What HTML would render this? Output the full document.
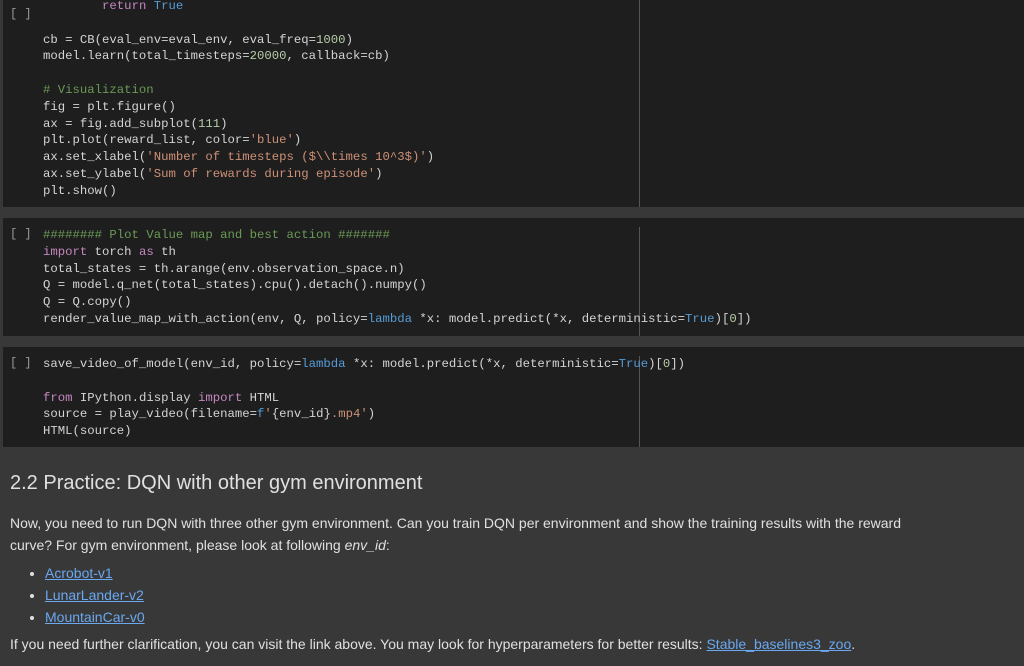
<!DOCTYPE html>
<html><head><meta charset="utf-8"><style>
body{margin:0;width:1024px;height:666px;background:#383838;overflow:hidden;position:relative;font-family:"Liberation Sans",sans-serif}
.cell{position:absolute;left:3px;right:0;background:#1e1e1e}
.code{position:absolute;left:40px;font-family:"Liberation Mono",monospace;font-size:12.3px;color:#d4d4d4;white-space:pre;line-height:16.8px}
.br{position:absolute;left:7px;font-family:"Liberation Mono",monospace;font-size:12px;color:#9a9a9a}
.rul{position:absolute;left:636px;width:1px;background:#555}
.k{color:#c586c0}.b{color:#569cd6}.n{color:#b5cea8}.s{color:#ce9178}.c{color:#6a9955}
.md{position:absolute;left:10px;color:#e0e0e0;font-size:14px;white-space:nowrap}
a{color:#6aa8f0;text-decoration:underline}
ul{margin:0;padding-left:25px}
</style></head><body>
<div class="cell" style="top:0;height:207px">
<div class="br" style="top:7px">[ ]</div>
<div class="rul" style="top:0;height:207px"></div>
<div class="code" style="top:-2px;left:40px">        <span class="k">return</span> <span class="b">True</span>

cb = CB(eval_env=eval_env, eval_freq=<span class="n">1000</span>)
model.learn(total_timesteps=<span class="n">20000</span>, callback=cb)

<span class="c"># Visualization</span>
fig = plt.figure()
ax = fig.add_subplot(<span class="n">111</span>)
plt.plot(reward_list, color=<span class="s">'blue'</span>)
ax.set_xlabel(<span class="s">'Number of timesteps ($\\times 10^3$)'</span>)
ax.set_ylabel(<span class="s">'Sum of rewards during episode'</span>)
plt.show()</div>
</div>
<div class="cell" style="top:218px;height:118px">
<div class="br" style="top:9px">[ ]</div>
<div class="rul" style="top:9px;height:109px"></div>
<div class="code" style="top:9px"><span class="c">######## Plot Value map and best action #######</span>
<span class="k">import</span> torch <span class="k">as</span> th
total_states = th.arange(env.observation_space.n)
Q = model.q_net(total_states).cpu().detach().numpy()
Q = Q.copy()
render_value_map_with_action(env, Q, policy=<span class="b">lambda</span> *x: model.predict(*x, deterministic=<span class="b">True</span>)[<span class="n">0</span>])</div>
</div>
<div class="cell" style="top:347px;height:100px">
<div class="br" style="top:9px">[ ]</div>
<div class="rul" style="top:9px;height:91px"></div>
<div class="code" style="top:9px">save_video_of_model(env_id, policy=<span class="b">lambda</span> *x: model.predict(*x, deterministic=<span class="b">True</span>)[<span class="n">0</span>])

<span class="k">from</span> IPython.display <span class="k">import</span> HTML
source = play_video(filename=<span class="b">f</span><span class="s">'</span>{env_id}<span class="s">.mp4'</span>)
HTML(source)</div>
</div>
<div class="md" style="top:472px;font-size:20px">2.2 Practice: DQN with other gym environment</div>
<div class="md" style="top:512px;line-height:22px">Now, you need to run DQN with three other gym environment. Can you train DQN per environment and show the training results with the reward<br>curve? For gym environment, please look at following <i>env_id</i>:</div>
<div class="md" style="top:562px;line-height:22px;left:20px"><ul><li><a>Acrobot-v1</a></li><li><a>LunarLander-v2</a></li><li><a>MountainCar-v0</a></li></ul></div>
<div class="md" style="top:636px">If you need further clarification, you can visit the link above. You may look for hyperparameters for better results: <a>Stable_baselines3_zoo</a>.</div>
</body></html>
